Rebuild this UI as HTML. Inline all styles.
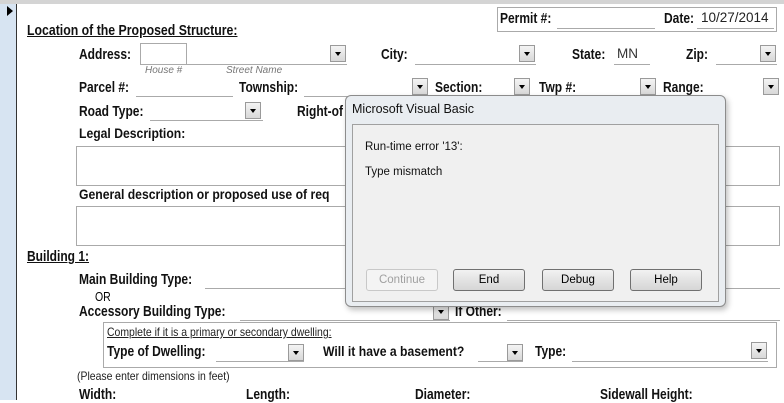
<!DOCTYPE html>
<html><head><meta charset="utf-8"><style>
*{margin:0;padding:0;box-sizing:border-box}
body{width:784px;height:400px;overflow:hidden;background:#fff;position:relative;font-family:"Liberation Sans",sans-serif}
.a{position:absolute;white-space:nowrap}
.l{position:absolute;white-space:nowrap;font-weight:bold;font-size:15px;color:#111;transform:scaleX(.8);transform-origin:0 0;line-height:15px}
.c{position:absolute;white-space:nowrap;font-weight:bold;font-size:14px;color:#111;transform:scaleX(.87);transform-origin:0 0;line-height:15px}
.ln{position:absolute;height:1px;background:#aaa}
.dd{position:absolute;width:16px;height:17px;border:1px solid #9a9a9a;background:linear-gradient(#f4f4f4,#d8d8d8)}
.dd:after{content:"";position:absolute;left:4px;top:6px;border-left:3.5px solid transparent;border-right:3.5px solid transparent;border-top:4px solid #000}
.box{position:absolute;border:1px solid #aaa}
.btn{position:absolute;top:269px;height:22px;width:72px;border:1px solid #707070;border-radius:3px;background:linear-gradient(#f2f2f2,#e3e3e3 50%,#d6d6d6);font-size:11.5px;text-align:center;line-height:20px;color:#000}
</style></head><body>
<div class="a" style="left:0;top:0;width:784px;height:4px;background:#d4d4d4"></div>
<div class="a" style="left:0;top:4px;width:17px;height:396px;background:#d7e4f2;border-right:1px solid #333"></div>
<div class="a" style="left:7px;top:6px;border-top:5px solid transparent;border-bottom:5px solid transparent;border-left:6px solid #000"></div>

<div class="box" style="left:497px;top:7px;width:280px;height:25px"></div>
<div class="l" style="left:500px;top:11px">Permit #:</div>
<div class="ln" style="left:557px;top:28px;width:98px"></div>
<div class="l" style="left:664px;top:11px">Date:</div>
<div class="a" style="left:701px;top:10px;font-size:13.5px;color:#222">10/27/2014</div>
<div class="ln" style="left:697px;top:28px;width:77px"></div>

<div class="l" style="left:27px;top:23px;text-decoration:underline;transform:scaleX(.82)">Location of the Proposed Structure:</div>

<div class="l" style="left:79px;top:47px">Address:</div>
<div class="box" style="left:140px;top:43px;width:47px;height:22px"></div>
<div class="ln" style="left:187px;top:64px;width:160px"></div>
<div class="dd" style="left:330px;top:45px"></div>
<div class="a" style="left:145px;top:65px;font-size:10px;font-style:italic;color:#777">House #</div>
<div class="a" style="left:226px;top:65px;font-size:10px;font-style:italic;color:#777">Street Name</div>
<div class="l" style="left:381px;top:47px">City:</div>
<div class="ln" style="left:415px;top:64px;width:121px"></div>
<div class="dd" style="left:519px;top:45px"></div>
<div class="l" style="left:572px;top:47px">State:</div>
<div class="a" style="left:617px;top:46px;font-size:13.5px;color:#333">MN</div>
<div class="ln" style="left:614px;top:64px;width:36px"></div>
<div class="l" style="left:686px;top:47px">Zip:</div>
<div class="ln" style="left:716px;top:64px;width:61px"></div>
<div class="dd" style="left:760px;top:45px"></div>

<div class="l" style="left:79px;top:80px">Parcel #:</div>
<div class="ln" style="left:136px;top:96px;width:97px"></div>
<div class="l" style="left:239px;top:80px">Township:</div>
<div class="ln" style="left:304px;top:96px;width:125px"></div>
<div class="dd" style="left:412px;top:78px"></div>
<div class="l" style="left:435px;top:80px">Section:</div>
<div class="dd" style="left:514px;top:78px"></div>
<div class="l" style="left:539px;top:80px">Twp #:</div>
<div class="dd" style="left:640px;top:78px"></div>
<div class="l" style="left:663px;top:80px">Range:</div>
<div class="dd" style="left:763px;top:78px"></div>

<div class="l" style="left:79px;top:104px">Road Type:</div>
<div class="ln" style="left:150px;top:120px;width:113px"></div>
<div class="dd" style="left:245px;top:102px"></div>
<div class="l" style="left:297px;top:104px">Right-of</div>

<div class="c" style="left:79px;top:126px">Legal Description:</div>
<div class="box" style="left:76px;top:146px;width:704px;height:40px"></div>
<div class="c" style="left:79px;top:187px">General description or proposed use of req</div>
<div class="box" style="left:76px;top:206px;width:704px;height:40px"></div>

<div class="l" style="left:27px;top:249px;text-decoration:underline">Building 1:</div>
<div class="l" style="left:79px;top:272px">Main Building Type:</div>
<div class="ln" style="left:205px;top:288px;width:575px"></div>
<div class="a" style="left:95px;top:290px;font-size:12.5px;transform:scaleX(.84);transform-origin:0 0">OR</div>
<div class="l" style="left:79px;top:304px">Accessory Building Type:</div>
<div class="ln" style="left:240px;top:320px;width:210px"></div>
<div class="dd" style="left:433px;top:303px"></div>
<div class="l" style="left:455px;top:304px">If Other:</div>
<div class="ln" style="left:507px;top:320px;width:273px"></div>

<div class="box" style="left:103px;top:322px;width:674px;height:46px"></div>
<div class="a" style="left:107px;top:325px;font-size:12px;text-decoration:underline;color:#222;transform:scaleX(.87);transform-origin:0 0">Complete if it is a primary or secondary dwelling:</div>
<div class="l" style="left:107px;top:344px">Type of Dwelling:</div>
<div class="ln" style="left:216px;top:361px;width:88px"></div>
<div class="dd" style="left:288px;top:344px"></div>
<div class="c" style="left:323px;top:344px">Will it have a basement?</div>
<div class="ln" style="left:478px;top:361px;width:45px"></div>
<div class="dd" style="left:507px;top:344px"></div>
<div class="l" style="left:535px;top:344px">Type:</div>
<div class="ln" style="left:572px;top:361px;width:196px"></div>
<div class="dd" style="left:751px;top:342px"></div>

<div class="a" style="left:77px;top:369px;font-size:12px;color:#222;transform:scaleX(.87);transform-origin:0 0">(Please enter dimensions in feet)</div>
<div class="l" style="left:79px;top:387px">Width:</div>
<div class="l" style="left:246px;top:387px">Length:</div>
<div class="l" style="left:415px;top:387px">Diameter:</div>
<div class="l" style="left:600px;top:387px">Sidewall Height:</div>

<div class="a" style="left:345px;top:95px;width:381px;height:212px;border:1px solid #8c8c8c;border-radius:6px;background:#e9edf1;box-shadow:2px 3px 6px rgba(0,0,0,.25)"></div>
<div class="a" style="left:352px;top:102px;font-size:12.5px;color:#111">Microsoft Visual Basic</div>
<div class="a" style="left:352px;top:124px;width:367px;height:178px;border:1px solid #a0a0a0;background:#f0f0f0"></div>
<div class="a" style="left:365px;top:141px;font-size:11.5px;color:#111">Run-time error '13':</div>
<div class="a" style="left:365px;top:166px;font-size:11.5px;color:#111">Type mismatch</div>
<div class="btn" style="left:366px;border-color:#c8c8c8;background:#f4f4f4;color:#a0a0a0">Continue</div>
<div class="btn" style="left:453px">End</div>
<div class="btn" style="left:542px">Debug</div>
<div class="btn" style="left:630px">Help</div>
</body></html>
